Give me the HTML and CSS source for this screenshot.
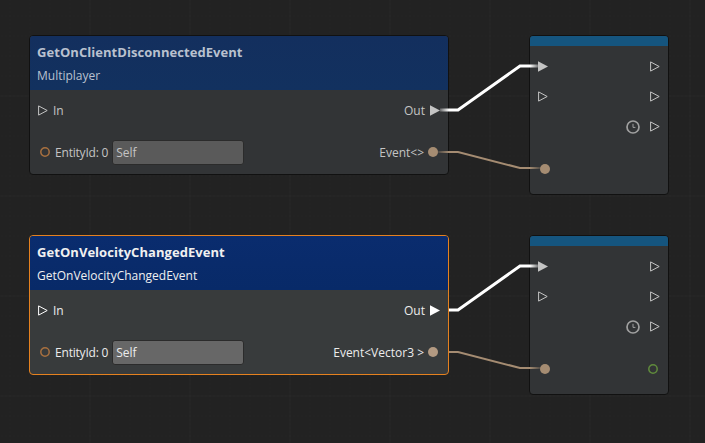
FILE: index.html
```html
<!DOCTYPE html>
<html lang="en">
<head>
    <meta charset="UTF-8">
    <title>Script Canvas</title>
    <link rel="stylesheet" href="styles.css">
</head>
<body>
    <svg width="0" height="0" class="defs">
        <defs>
            <symbol id="pin-open" viewBox="0 0 10 11">
                <path d="M0.6 0.9 L9.2 5.5 L0.6 10.1 Z" fill="none" stroke="currentColor" stroke-width="1"/>
            </symbol>
            <symbol id="pin-full" viewBox="0 0 10 11">
                <path d="M0 0.3 L10 5.5 L0 10.7 Z" fill="currentColor"/>
            </symbol>
            <symbol id="clock" viewBox="0 0 14 14">
                <circle cx="7" cy="7" r="6" fill="none" stroke="currentColor" stroke-width="1.7"/>
                <path d="M7 3.8 V7.4 H9.4" fill="none" stroke="currentColor" stroke-width="1"/>
            </symbol>
            <symbol id="ring" viewBox="0 0 10 10">
                <circle cx="5" cy="5" r="4.2" fill="none" stroke="currentColor" stroke-width="1.5"/>
            </symbol>
        </defs>
    </svg>

    <div class="canvas">
        <svg class="grid" width="705" height="443">
            <defs>
                <pattern id="minor" width="20" height="20" patternUnits="userSpaceOnUse" x="9.5" y="15.5">
                    <path d="M0 0 V20 M0 0 H20" stroke="#2a2a2a" stroke-width="1" stroke-dasharray="1 3" fill="none"/>
                </pattern>
                <pattern id="major" width="100" height="100" patternUnits="userSpaceOnUse" x="89.5" y="95.5">
                    <path d="M0 0 V100 M0 0 H100" stroke="#2b2b2b" stroke-width="1" fill="none"/>
                </pattern>
            </defs>
            <rect width="705" height="443" fill="url(#minor)"/>
            <rect width="705" height="443" fill="url(#major)"/>
        </svg>

        <!-- first pair -->
        <div class="node event-node node-one">
            <div class="node-title">
                <div class="title-main">GetOnClientDisconnectedEvent</div>
                <div class="title-sub">Multiplayer</div>
            </div>
            <div class="node-body">
                <div class="row">
                    <div class="slot"><svg class="pin"><use href="#pin-open"/></svg><span>In</span></div>
                    <div class="slot"><span>Out</span><svg class="pin"><use href="#pin-full"/></svg></div>
                </div>
                <div class="row row-data">
                    <div class="slot">
                        <svg class="ring"><use href="#ring"/></svg><span class="entity">EntityId: 0</span>
                        <div class="field">Self</div>
                    </div>
                    <div class="slot"><span>Event&lt;&gt;</span><i class="dot"></i></div>
                </div>
            </div>
        </div>

        <div class="node side-node side-one">
            <div class="side-title"></div>
            <div class="side-row">
                <svg class="pin pin-linked"><use href="#pin-full"/></svg>
                <svg class="pin"><use href="#pin-open"/></svg>
            </div>
            <div class="side-row">
                <svg class="pin"><use href="#pin-open"/></svg>
                <svg class="pin"><use href="#pin-open"/></svg>
            </div>
            <div class="side-row side-right">
                <svg class="clock"><use href="#clock"/></svg>
                <svg class="pin"><use href="#pin-open"/></svg>
            </div>
            <div class="side-row side-last">
                <i class="dot"></i>
            </div>
        </div>

        <!-- second pair -->
        <div class="node event-node node-two selected">
            <div class="node-title">
                <div class="title-main">GetOnVelocityChangedEvent</div>
                <div class="title-sub">GetOnVelocityChangedEvent</div>
            </div>
            <div class="node-body">
                <div class="row">
                    <div class="slot"><svg class="pin"><use href="#pin-open"/></svg><span>In</span></div>
                    <div class="slot"><span>Out</span><svg class="pin"><use href="#pin-full"/></svg></div>
                </div>
                <div class="row row-data">
                    <div class="slot">
                        <svg class="ring"><use href="#ring"/></svg><span class="entity">EntityId: 0</span>
                        <div class="field">Self</div>
                    </div>
                    <div class="slot"><span>Event&lt;Vector3 &gt;</span><i class="dot"></i></div>
                </div>
            </div>
        </div>

        <div class="node side-node side-two">
            <div class="side-title"></div>
            <div class="side-row">
                <svg class="pin pin-linked"><use href="#pin-full"/></svg>
                <svg class="pin"><use href="#pin-open"/></svg>
            </div>
            <div class="side-row">
                <svg class="pin"><use href="#pin-open"/></svg>
                <svg class="pin"><use href="#pin-open"/></svg>
            </div>
            <div class="side-row side-right">
                <svg class="clock"><use href="#clock"/></svg>
                <svg class="pin"><use href="#pin-open"/></svg>
            </div>
            <div class="side-row side-last">
                <i class="dot"></i>
                <svg class="ring ring-green"><use href="#ring"/></svg>
            </div>
        </div>

        <svg class="wires" width="705" height="443">
            <defs>
                <linearGradient id="fade-out" gradientUnits="userSpaceOnUse" x1="440" y1="0" x2="449" y2="0">
                    <stop offset="0" stop-color="#fff" stop-opacity="0.25"/>
                    <stop offset="1" stop-color="#fff"/>
                </linearGradient>
                <linearGradient id="fade-in" gradientUnits="userSpaceOnUse" x1="530" y1="0" x2="539" y2="0">
                    <stop offset="0" stop-color="#fff"/>
                    <stop offset="1" stop-color="#fff" stop-opacity="0.25"/>
                </linearGradient>
                <linearGradient id="fade-out-data" gradientUnits="userSpaceOnUse" x1="438" y1="0" x2="449" y2="0">
                    <stop offset="0" stop-color="#a58c72" stop-opacity="0.2"/>
                    <stop offset="1" stop-color="#a58c72"/>
                </linearGradient>
                <linearGradient id="fade-in-data" gradientUnits="userSpaceOnUse" x1="530" y1="0" x2="541" y2="0">
                    <stop offset="0" stop-color="#a58c72"/>
                    <stop offset="1" stop-color="#a58c72" stop-opacity="0.2"/>
                </linearGradient>
            </defs>
            <!-- top wires -->
            <path class="wire" d="M449 110 H458 L520 66 H530"/>
            <path d="M440 110 H449" class="wire-end" stroke="url(#fade-out)"/>
            <path d="M530 66 H538" class="wire-end" stroke="url(#fade-in)"/>
            <path class="wire-data" d="M449 152 H458 L520 168 H530"/>
            <path d="M438 152 H449" class="data-end" stroke="url(#fade-out-data)"/>
            <path d="M530 168 H541" class="data-end" stroke="url(#fade-in-data)"/>
            <!-- bottom wires -->
            <path class="wire" d="M449 310 H458 L520 266 H530"/>
            <path d="M530 266 H538" class="wire-end" stroke="url(#fade-in)"/>
            <path class="wire-data" d="M449 352 H458 L520 368 H530"/>
            <path d="M530 368 H541" class="data-end" stroke="url(#fade-in-data)"/>
        </svg>
    </div>
</body>
</html>
```

FILE: styles.css
```css
html, body {
    margin: 0;
    padding: 0;
}

.defs {
    position: absolute;
}

.canvas {
    position: relative;
    width: 705px;
    height: 443px;
    overflow: hidden;
    background-color: #222222;
    font-family: "Open Sans", "Noto Sans", sans-serif;
    font-size: 12px;
    color: #c4c4c4;
}

.grid,
.wires {
    position: absolute;
    left: 0;
    top: 0;
}

.wires {
    pointer-events: none;
}

.wire,
.wire-end {
    fill: none;
    stroke-width: 3;
}

.wire {
    stroke: #ffffff;
}

.wire-data,
.data-end {
    fill: none;
    stroke-width: 2;
}

.wire-data {
    stroke: #a58c72;
}

/* nodes */
.node {
    position: absolute;
    box-sizing: border-box;
    background-color: #323436;
    border: 1px solid #111111;
    border-radius: 4px;
    overflow: hidden;
}

.event-node {
    left: 29px;
    width: 420px;
    height: 140px;
    display: flex;
    flex-direction: column;
}

.node-one {
    top: 35px;
}

.node-two {
    top: 235px;
}

.node-title {
    height: 54px;
    box-sizing: border-box;
    padding: 8px 7px 0;
    background: linear-gradient(#132f5e, #12315f);
    color: #b9c1cf;
}

.title-main {
    font-size: 13px;
    font-weight: 700;
    line-height: 17px;
    letter-spacing: 0.05px;
}

.title-sub {
    line-height: 15px;
    margin-top: 7px;
}

.node-body {
    flex: 1;
    display: flex;
    flex-direction: column;
    padding: 0 8px;
}

.row {
    display: flex;
    justify-content: space-between;
    align-items: center;
    height: 40px;
}

.row-data {
    height: 42px;
    margin-top: 1px;
    padding-left: 2px;
}

.slot {
    display: flex;
    align-items: center;
    gap: 5px;
}

.slot .dot {
    margin-left: -1px;
}

.entity {
    letter-spacing: -0.2px;
}

.pin {
    width: 10px;
    height: 11px;
    color: #c4c4c4;
}

.ring {
    display: block;
    width: 10px;
    height: 10px;
    color: #a8703f;
}

.ring-green {
    margin-right: 2px;
    color: #5f8a3c;
}

.dot {
    display: block;
    width: 10px;
    height: 10px;
    margin: 0 2px;
    border-radius: 50%;
    background-color: #a58c72;
}

.field {
    width: 132px;
    height: 25px;
    box-sizing: border-box;
    margin-left: -1px;
    padding-left: 3px;
    line-height: 23px;
    background-color: #5a5a5a;
    border: 1px solid #2b2b2b;
    border-radius: 3px;
}

/* right hand nodes */
.side-node {
    left: 529px;
    width: 140px;
    height: 160px;
}

.side-one {
    top: 35px;
}

.side-two {
    top: 235px;
}

.side-title {
    height: 10px;
    background-color: #15557f;
}

.side-row {
    height: 30px;
    display: flex;
    justify-content: space-between;
    align-items: center;
    padding: 0 8px;
}

.side-row:nth-child(2) {
    margin-top: 5px;
}

.side-right {
    justify-content: flex-end;
    gap: 10px;
}

.clock {
    width: 14px;
    height: 14px;
    margin-top: 2px;
    color: #a0a0a0;
}

.side-last {
    margin-top: 13px;
}

/* selected state */
.selected {
    border-color: #e5811f;
    background-color: #383b3c;
    color: #ececec;
}

.selected .node-title {
    background: linear-gradient(#0a2c6e, #082a68);
    color: #f0f0f0;
}

.selected .pin {
    color: #ffffff;
}

.selected .field {
    background-color: #676767;
}

.selected .dot {
    background-color: #b39a82;
}
```
